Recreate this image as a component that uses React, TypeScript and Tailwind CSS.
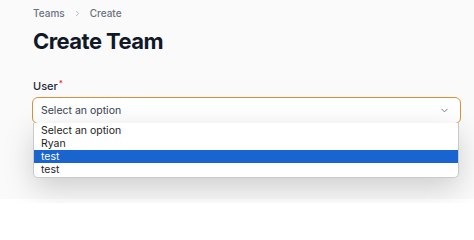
import { ChevronDown, ChevronRight } from 'lucide-react';

const options = ['Select an option', 'Ryan', 'test', 'test'];

export default function App() {
  return (
    <div className="h-[203px] w-[474px] overflow-hidden bg-[#fafafa] font-['Inter',sans-serif]">
      <div className="flex h-[199px] flex-col px-[33px] pt-[6px]">
        <nav className="flex h-[14px] items-center gap-[8px] text-[10px] font-medium text-[#6b7280]">
          <span>Teams</span>
          <ChevronRight className="h-[9px] w-[9px] text-[#9ca3af]" strokeWidth={2} />
          <span>Create</span>
        </nav>

        <h1 className="mt-[6px] text-[22px] font-bold leading-[30px] tracking-tight text-[#111827]">
          Create Team
        </h1>

        <label className="mt-[23px] flex h-[14px] items-start text-[11px] font-medium leading-[14px] text-[#1f2937]">
          User
          <span className="ml-[1px] text-[8px] leading-[8px] text-[#dc2626]">*</span>
        </label>

        <div className="relative mt-[4px] -ml-px w-[429px]">
          <div className="flex h-[27px] items-center justify-between rounded-[6px] border-[1.5px] border-[#d9913a] bg-white pl-[8px] pr-[10px] text-[10.5px] text-[#374151]">
            <span>Select an option</span>
            <ChevronDown className="h-[11px] w-[11px] text-[#6b7280]" strokeWidth={2} />
          </div>

          <ul className="absolute left-px right-[2px] top-[26px] overflow-hidden rounded-b-[5px] border border-t-0 border-[#c9c9c9] bg-white py-px text-[10.5px] leading-[13px] text-[#222] shadow-[0_10px_30px_rgba(0,0,0,0.18)]">
            {options.map((opt, i) => (
              <li
                key={i}
                className={
                  i === 2
                    ? 'h-[13px] bg-[#1a64d0] pl-[7px] text-white'
                    : 'h-[13px] pl-[7px]'
                }
              >
                {opt}
              </li>
            ))}
          </ul>
        </div>
      </div>
      <div className="h-[4px] bg-white" />
    </div>
  );
}
